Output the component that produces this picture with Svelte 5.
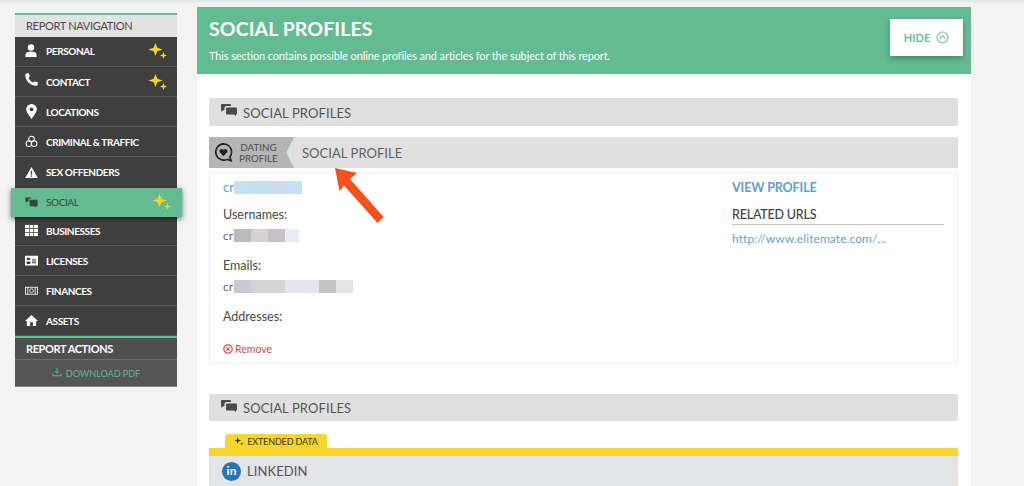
<script>
  const spark = ['personal', 'contact', 'social'];
  const items = [
    { id: 'personal', label: 'PERSONAL' },
    { id: 'contact', label: 'CONTACT' },
    { id: 'locations', label: 'LOCATIONS' },
    { id: 'criminal', label: 'CRIMINAL & TRAFFIC' },
    { id: 'sex', label: 'SEX OFFENDERS' },
    { id: 'social', label: 'SOCIAL' },
    { id: 'businesses', label: 'BUSINESSES' },
    { id: 'licenses', label: 'LICENSES' },
    { id: 'finances', label: 'FINANCES' },
    { id: 'assets', label: 'ASSETS' }
  ];
  const nameBlocks = ['#c5e1f3', '#c6e0f2', '#cfdcec', '#c6e1f4'];
  const userBlocks = ['#bdb9bc', '#d9d0d0', '#c9c1c9', '#e3eef7'];
  const mailBlocks = ['#c6ccd1', '#d3d4d8', '#d4d5d9', '#e4e6ec', '#e2e6ec', '#c9c4c4', '#e4e4e6'];
</script>

{#snippet chat(color)}
  <svg class="chat" viewBox="0 0 16 12" fill={color}>
    <path d="M1 0h8a1 1 0 0 1 1 1v1H5.500a2 2 0 0 0-2 2v2H2.500L0.500 8V6.200A1 1 0 0 1 0 5.500V1a1 1 0 0 1 1-1z" />
    <path d="M6 3.500h9a1 1 0 0 1 1 1v5a1 1 0 0 1-1 1v1.500l-2-1.500H6a1 1 0 0 1-1-1v-5a1 1 0 0 1 1-1z" />
  </svg>
{/snippet}

{#snippet sparkle()}
  <svg class="spark" viewBox="0 0 20 18" fill="#f9d423">
    <path d="M7.500 0 9.300 4.700 14.500 6.500 9.300 8.300 7.500 13 5.700 8.300 0.500 6.500 5.700 4.700z" />
    <path d="M15.500 9 16.400 11.600 19 12.500 16.400 13.400 15.500 16 14.600 13.400 12 12.500 14.600 11.600z" />
  </svg>
{/snippet}

{#snippet icon(id)}
  <svg class="nav-ico {id}" viewBox="0 0 14 14" fill={id === 'social' ? '#2f4a3c' : '#fff'}>
    {#if id === 'personal'}
      <circle cx="7" cy="3.500" r="3.200" /><path d="M1.500 13v-2.500C1.500 8.500 4 7.500 7 7.500s5.500 1 5.500 3V13z" />
    {:else if id === 'contact'}
      <path d="M1.500 0.500 4 0 5.300 3.500 3.800 5C4.500 7.200 6.500 9.300 9 10.200L10.300 8.800 14 10.300l-.4 2.400c-.2.700-1 1.100-1.700 1.100C5.500 13.800.3 8.200.3 2.200.3 1.500.7.800 1.500.5z" />
    {:else if id === 'locations'}
      <path fill-rule="evenodd" d="M7 0a5 5 0 0 1 5 5c0 3-3 6-5 9-2-3-5-6-5-9a5 5 0 0 1 5-5zm0 3.200a1.800 1.800 0 1 0 0 3.600 1.800 1.800 0 0 0 0-3.600z" />
    {:else if id === 'criminal'}
      <g fill="none" stroke="#fff" stroke-width="1.100"><circle cx="7" cy="4.300" r="3" /><circle cx="4.200" cy="9.300" r="3" /><circle cx="9.800" cy="9.300" r="3" /></g>
    {:else if id === 'sex'}
      <path fill-rule="evenodd" d="M7 1l6.800 12H.2zM6.300 5v4.300h1.400V5zm0 5.200v1.400h1.400v-1.400z" />
    {:else if id === 'social'}
      <path d="M0.500 1.500h6v1.500H4v3H2.500L1.200 7V6H.5z" /><path d="M5 4h8.500v7H12v1.500L10.200 11H5z" />
    {:else if id === 'businesses'}
      <path d="M0 1h14v12H0z" />
      <path fill="#3f3f3f" d="M0 4.700h14v.7H0zM0 8.700h14v.7H0zM4.400 1h.7v12h-.7zM9 1h.7v12H9z" />
    {:else if id === 'licenses'}
      <path fill-rule="evenodd" d="M0 2h14v10.500H0zM2 4v2.500h3.500V4zm-.3 6.800h4.100V8H1.700zM7.500 5v1H12V5zm0 2v1H12V7zm0 2v1H12V9z" />
    {:else if id === 'finances'}
      <g fill="none" stroke="#fff" stroke-width="0.900"><rect x="0.500" y="3.500" width="13" height="7.500" /><circle cx="7" cy="7.200" r="2" /><path d="M3 3.500v7.500M11 3.500v7.500" /></g>
    {:else}
      <path d="M7 1 14 7.500h-2V13H8.500V9h-3v4H2V7.500H0z" />
    {/if}
  </svg>
{/snippet}

<div class="page">
  <aside class="sidebar">
    <h3 class="nav-title">REPORT NAVIGATION</h3>
    <nav class="nav">
      {#each items as it}
        <div class="row" class:active={it.id === 'social'}>
          <span class="ico-cell">{@render icon(it.id)}</span>
          <span class="label">{it.label}</span>
          {#if spark.includes(it.id)}{@render sparkle()}{/if}
        </div>
      {/each}
    </nav>
    <div class="actions">REPORT ACTIONS</div>
    <div class="download">
      <svg class="dl" viewBox="0 0 12 12" fill="none" stroke="#5fb78f" stroke-width="1.200">
        <path d="M6 1v6.500M3.500 5 6 7.500 8.500 5M1 8v2.500h10V8" />
      </svg>
      DOWNLOAD PDF
    </div>
  </aside>

  <main class="main">
    <header class="hero">
      <div>
        <h1>SOCIAL PROFILES</h1>
        <p>This section contains possible online profiles and articles for the subject of this report.</p>
      </div>
      <button class="hide">HIDE
        <svg viewBox="0 0 14 14" fill="none" stroke="#6cc09a" stroke-width="1.100">
          <circle cx="7" cy="7" r="6" /><path d="M3.800 8.300 7 5l3.200 3.300" />
        </svg>
      </button>
    </header>

    <div class="content">
      <div class="bar section-bar">{@render chat('#4a4a4a')}<span>SOCIAL PROFILES</span></div>

      <div class="bar type-bar">
        <div class="type-tag">
          <svg class="heart" viewBox="0 0 22 22" fill="none" stroke="#222" stroke-width="1.700">
            <path d="M11 2a8.500 8.500 0 0 1 8.500 8.500c0 2-.7 3.800-1.800 5.200l1.300 3.800-4-1.300A8.500 8.500 0 1 1 11 2z" />
            <path fill="#222" stroke="none" d="M11 15 6.800 10.500A2.400 2.400 0 0 1 11 8.300a2.400 2.400 0 0 1 4.200 2.200z" />
          </svg>
          <span class="tag-text">DATING<br />PROFILE</span>
        </div>
        <span class="type-title">SOCIAL PROFILE</span>
      </div>

      <div class="card">
        <div class="left">
          <div class="line name"><span class="cr">cr</span><span class="blocks">{#each nameBlocks as c}<i style:background={c}></i>{/each}</span></div>
          <div class="key">Usernames:</div>
          <div class="line val"><span class="cr">cr</span><span class="blocks short">{#each userBlocks as c}<i style:background={c}></i>{/each}</span></div>
          <div class="key k2">Emails:</div>
          <div class="line val"><span class="cr">cr</span><span class="blocks">{#each mailBlocks as c}<i style:background={c}></i>{/each}</span></div>
          <div class="key k3">Addresses:</div>
          <div class="remove">
            <svg viewBox="0 0 10 10" fill="none" stroke="#d9534f" stroke-width="1.200"><circle cx="5" cy="5" r="4.200" /><path d="M3.300 3.300l3.400 3.400M6.700 3.300 3.300 6.700" /></svg>
            Remove
          </div>
        </div>
        <div class="right">
          <div class="view">VIEW PROFILE</div>
          <div class="related">RELATED URLS</div>
          <div class="url">http://www.elitemate.com/...</div>
        </div>
      </div>

      <div class="bar section-bar second">{@render chat('#4a4a4a')}<span>SOCIAL PROFILES</span></div>

      <div class="ext-tab">
        <svg viewBox="0 0 12 12" fill="#3a3200"><path d="M4.500 1.500 5.500 4.500 8.500 5.500 5.500 6.500 4.500 9.500 3.500 6.500 0.500 5.500 3.500 4.500z" /><path d="M9.500 7.500 10 9 11.500 9.500 10 10 9.500 11.500 9 10 7.500 9.500 9 9z" /></svg>
        EXTENDED DATA
      </div>
      <div class="linkedin">
        <span class="in">in</span>
        <span>LINKEDIN</span>
      </div>
    </div>

    <svg class="arrow" viewBox="0 0 52 58" fill="#f4511e">
      <path d="M1 1 23 6 16 12 49.500 50 43.500 56 10 18.500 5.500 24z" />
    </svg>
  </main>
</div>

<style>
  :global(body) {
    margin: 0;
    background: #f3f3f3;
    font-family: Lato, "Open Sans", sans-serif;
    overflow: hidden;
  }
  .page {
    display: flex;
    align-items: flex-start;
    height: 486px;
    overflow: hidden;
    box-shadow: inset 0 4px 3px -2px #e4e4e4;
  }

  .sidebar {
    width: 162px;
    margin: 13px 0 0 15px;
    border-top: 2px solid #6cbb96;
    flex: none;
  }
  .nav-title {
    margin: 0;
    height: 22px;
    line-height: 22px;
    padding-left: 11px;
    background: #e2e2e2;
    color: #4a4a4a;
    font-size: 11px;
    font-weight: 400;
    letter-spacing: -0.3px;
  }
  .nav { background: #3f3f3f; }
  .row {
    display: flex;
    align-items: center;
    height: 30px;
    box-sizing: border-box;
    border-bottom: 1px solid #5a5a5a;
    color: #fff;
    font-size: 10px;
    font-weight: 700;
    letter-spacing: -0.4px;
    padding-right: 9px;
  }
  .row:first-child { padding-bottom: 1px; }
  .row:nth-child(5) { border-bottom: none; }
  .row.active {
    position: relative;
    margin: 1px -5px -1px -4px;
    height: 29px;
    padding: 0 10px 1px 4px;
    background: #64bb92;
    color: #2f4a3c;
    font-weight: 400;
    border-bottom: none;
    box-shadow: 0 2px 5px rgba(0, 0, 0, 0.55);
  }
  .ico-cell {
    width: 31px;
    display: flex;
    justify-content: center;
    padding-left: 1px;
    box-sizing: border-box;
  }
  .nav-ico { width: 13px; height: 13px; }
  .nav-ico.contact { margin-top: -4px; }
  .nav-ico.locations { width: 15px; height: 15px; }
  .nav-ico.personal { width: 14px; height: 14px; }
  .label { flex: 1; }
  .spark { width: 20px; height: 18px; margin-top: 2px; }

  .actions {
    height: 24px;
    line-height: 21px;
    box-sizing: border-box;
    border-top: 2px solid #6cbb96;
    border-bottom: 1px solid #6e6e6e;
    padding-left: 11px;
    background: #4f4f4f;
    color: #fff;
    font-size: 11px;
    font-weight: 700;
    letter-spacing: -0.4px;
  }
  .download {
    height: 27px;
    display: flex;
    align-items: center;
    justify-content: center;
    gap: 4px;
    background: #555;
    color: #5fb78f;
    font-size: 9.200px;
    letter-spacing: -0.1px;
    border-bottom: 1px solid #888;
    box-sizing: border-box;
  }
  .dl { width: 10px; height: 10px; margin-top: -3px; }

  .main {
    position: relative;
    width: 774px;
    height: 479px;
    margin: 7px 0 0 20px;
    background: #fff;
    flex: none;
  }
  .hero {
    height: 67px;
    background: #64bb92;
    display: flex;
    justify-content: space-between;
    box-sizing: border-box;
    padding: 11px 8px 0 12px;
    color: #fff;
  }
  .hero h1 {
    margin: 0;
    font-size: 19.500px;
    line-height: 22px;
    font-weight: 700;
    letter-spacing: 0.1px;
  }
  .hero p {
    margin: 9px 0 0;
    font-size: 10.900px;
    line-height: 13px;
    letter-spacing: -0.08px;
  }
  .hide {
    width: 73px;
    height: 37px;
    margin-top: 1px;
    border: 0;
    background: #fff;
    font: 700 11px Lato, sans-serif;
    color: #6cc09a;
    display: flex;
    align-items: center;
    justify-content: center;
    gap: 6px;
    box-shadow: 0 3px 6px rgba(0, 0, 0, 0.25);
    padding: 0;
  }
  .hide svg { width: 13px; height: 13px; }

  .content { padding: 24px 13px 0 12px; }
  .bar { background: #e0e0e0; display: flex; align-items: center; }
  .section-bar {
    height: 28px;
    padding-left: 12px;
    gap: 6px;
    color: #555;
    font-size: 13px;
    letter-spacing: 0.1px;
  }
  .section-bar span { margin-top: 2px; }
  .chat { width: 16px; height: 12px; margin-top: -4px; }
  .second { margin-top: 30px; height: 27px; }
  .second span { margin-top: 0; }

  .type-bar {
    height: 31px;
    margin-top: 11px;
    color: #606060;
  }
  .type-tag {
    width: 85px;
    height: 31px;
    background: #b5b5b5;
    clip-path: polygon(0 0, 100% 0, 91% 50%, 100% 100%, 0 100%);
    display: flex;
    align-items: center;
    padding-left: 4px;
    box-sizing: border-box;
    gap: 4px;
  }
  .heart { width: 21px; height: 21px; flex: none; }
  .tag-text {
    font-size: 9.800px;
    line-height: 10.500px;
    color: #4d4d4d;
    text-align: center;
    margin-left: 1px;
  }
  .type-title {
    margin-left: 8px;
    font-size: 13px;
    letter-spacing: 0.05px;
  }

  .card {
    margin-top: 4px;
    height: 192px;
    box-sizing: border-box;
    border: 1px solid #ececec;
    display: flex;
    padding: 7px 13px 0 13px;
    color: #555;
    font-size: 12.500px;
  }
  .left { flex: 1; position: relative; }
  .line { display: flex; align-items: center; height: 14px; }
  .name { color: #5a9fd0; font-size: 13px; }
  .cr { width: 11px; flex: none; }
  .blocks { display: flex; height: 13px; }
  .blocks i { width: 17px; display: block; }
  .blocks.short i:last-child { width: 14px; }
  .key { margin-top: 13px; height: 15px; line-height: 15px; color: #4a4a4a; }
  .k2 { margin-top: 16px; }
  .k3 { margin-top: 16px; }
  .val { margin-top: 6px; color: #666; font-size: 12px; }
  .remove {
    position: absolute;
    left: 0;
    top: 163px;
    display: flex;
    align-items: center;
    gap: 2px;
    font-size: 10.500px;
    color: #c9504d;
  }
  .remove svg { width: 10px; height: 10px; }
  .right { width: 212px; padding-top: 1px; }
  .view { color: #5a9fd0; font-weight: 700; font-size: 12.500px; line-height: 14px; letter-spacing: -0.1px; }
  .related {
    margin-top: 13px;
    padding-bottom: 2px;
    border-bottom: 1px solid #c4c4c4;
    color: #444;
    font-size: 12.500px;
    line-height: 14px;
    font-weight: 500;
    letter-spacing: -0.2px;
  }
  .url { margin-top: 7px; color: #6e9fc4; font-size: 12px; line-height: 14px; letter-spacing: 0.08px; }

  .ext-tab {
    margin: 13px 0 0 16px;
    width: 102px;
    height: 14px;
    background: #f9d62e;
    border-radius: 3px 3px 0 0;
    display: flex;
    align-items: center;
    justify-content: center;
    gap: 3px;
    color: #4a4200;
    font-size: 9px;
    font-weight: 500;
    letter-spacing: -0.15px;
  }
  .ext-tab svg { width: 10px; height: 10px; }
  .linkedin {
    border-top: 8px solid #f9d62e;
    background: #e2e4e5;
    height: 40px;
    box-sizing: border-box;
    padding: 6px 0 0 13px;
    display: flex;
    align-items: flex-start;
    gap: 6px;
    color: #555;
    font-size: 13px;
    line-height: 19px;
    letter-spacing: 0.1px;
  }
  .in {
    width: 19px;
    height: 19px;
    border-radius: 50%;
    background: #2a72b8;
    color: #fff;
    font-weight: 700;
    font-size: 12px;
    line-height: 18px;
    text-align: center;
    letter-spacing: 0;
  }

  .arrow {
    position: absolute;
    left: 137px;
    top: 160px;
    width: 52px;
    height: 58px;
  }
</style>
